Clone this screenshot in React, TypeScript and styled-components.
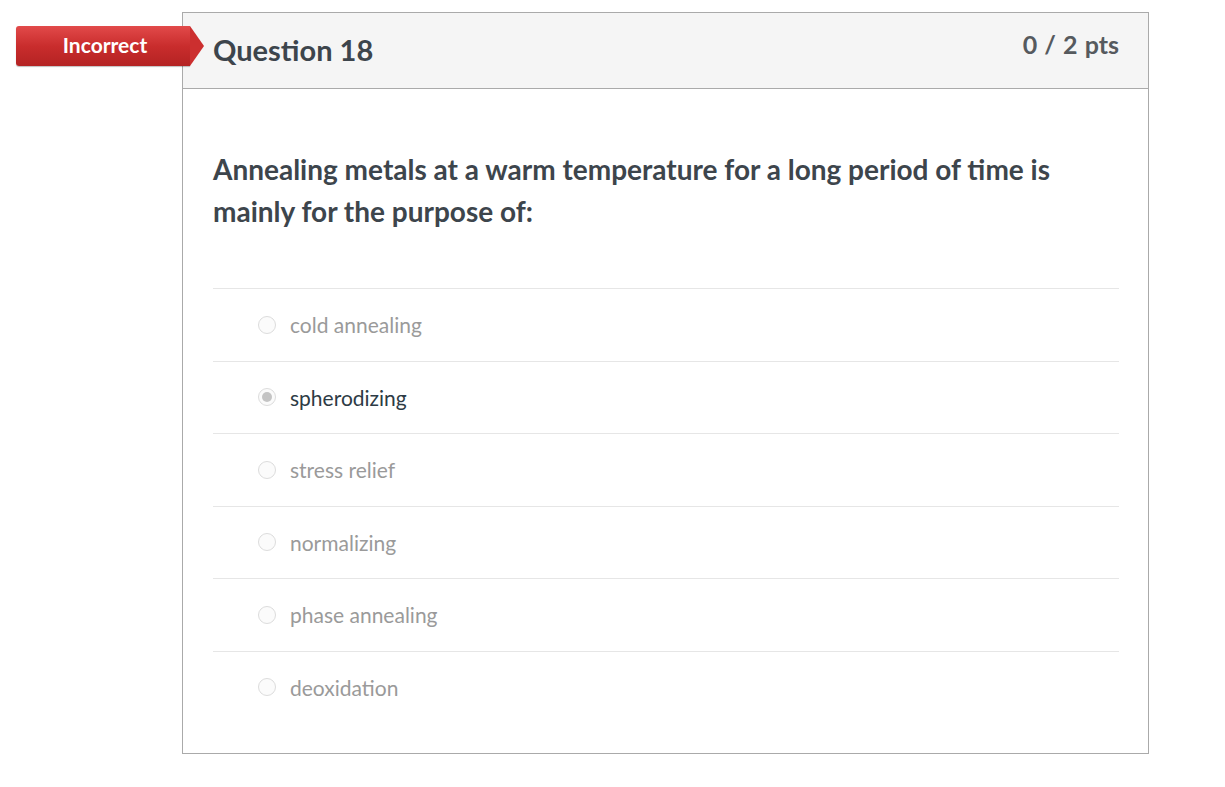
import styled, { createGlobalStyle } from "styled-components";

const GlobalStyle = createGlobalStyle`
  html, body {
    margin: 0;
    padding: 0;
    background: #fff;
    font-family: Lato, "Open Sans", "Liberation Sans", sans-serif;
  }
`;

const answers = [
  { label: "cold annealing", selected: false },
  { label: "spherodizing", selected: true },
  { label: "stress relief", selected: false },
  { label: "normalizing", selected: false },
  { label: "phase annealing", selected: false },
  { label: "deoxidation", selected: false },
];

const App = () => {
  return (
    <Page>
      <GlobalStyle />
      <Card>
        <Banner>Incorrect</Banner>
        <Header>
          <Title>Question 18</Title>
          <Points>0 / 2 pts</Points>
        </Header>
        <Body>
          <QuestionText>
            Annealing metals at a warm temperature for a long period of time is
            mainly for the purpose of:
          </QuestionText>
          <AnswerList>
            {answers.map((a) => (
              <AnswerRow key={a.label}>
                <Radio $selected={a.selected} />
                <AnswerLabel $selected={a.selected}>{a.label}</AnswerLabel>
              </AnswerRow>
            ))}
          </AnswerList>
        </Body>
      </Card>
    </Page>
  );
};

export default App;

const Page = styled.div`
  padding: 12px 0 0 182px;
  width: 1225px;
  height: 787px;
  box-sizing: border-box;
`;

const Card = styled.div`
  position: relative;
  width: 967px;
  height: 742px;
  box-sizing: border-box;
  border: 1px solid #aaaaaa;
`;

const Banner = styled.div`
  position: absolute;
  left: -167px;
  top: 13px;
  width: 174px;
  height: 40px;
  padding-left: 4px;
  box-sizing: border-box;
  border-radius: 3px 0 0 3px;
  background: linear-gradient(to bottom, #e24a4a 0%, #c92d2d 50%, #b42323 100%);
  box-shadow: 0 1px 1px rgba(0, 0, 0, 0.25);
  color: #fff;
  font-size: 21px;
  font-weight: 700;
  line-height: 38px;
  text-align: center;

  &::after {
    content: "";
    position: absolute;
    right: -14px;
    top: 0;
    border-top: 20px solid transparent;
    border-bottom: 20px solid transparent;
    border-left: 14px solid #cc2f2f;
  }
`;

const Header = styled.div`
  display: flex;
  justify-content: space-between;
  align-items: flex-start;
  height: 75px;
  padding: 0 29px 0 30px;
  background: #f5f5f5;
  border-bottom: 1px solid #aaaaaa;
`;

const Title = styled.h2`
  margin: 0;
  padding-top: 19px;
  font-size: 29px;
  font-weight: 700;
  color: #3d454c;
`;

const Points = styled.div`
  padding-top: 16px;
  font-size: 25px;
  font-weight: 700;
  color: #565a5e;
  word-spacing: 1px;
`;

const Body = styled.div`
  padding: 59px 29px 0 30px;
`;

const QuestionText = styled.p`
  margin: 0 0 56px;
  font-size: 28px;
  font-weight: 700;
  line-height: 42px;
  color: #3d454c;
`;

const AnswerList = styled.div`
  display: flex;
  flex-direction: column;
`;

const AnswerRow = styled.div`
  display: flex;
  align-items: center;
  height: 72.5px;
  padding-left: 45px;
  border-top: 1px solid #e6e6e6;
  box-sizing: border-box;
`;

const Radio = styled.span<{ $selected: boolean }>`
  position: relative;
  width: 18px;
  height: 18px;
  border-radius: 50%;
  border: 1px solid #dcdcdc;
  box-sizing: border-box;
  background: #fbfbfb;
  margin-right: 14px;

  &::after {
    content: "";
    display: ${(p) => (p.$selected ? "block" : "none")};
    position: absolute;
    left: 3px;
    top: 3px;
    width: 10px;
    height: 10px;
    border-radius: 50%;
    background: #c4c4c4;
  }
`;

const AnswerLabel = styled.span<{ $selected: boolean }>`
  font-size: 21px;
  color: ${(p) => (p.$selected ? "#2d3b45" : "#9a9a9a")};
`;
